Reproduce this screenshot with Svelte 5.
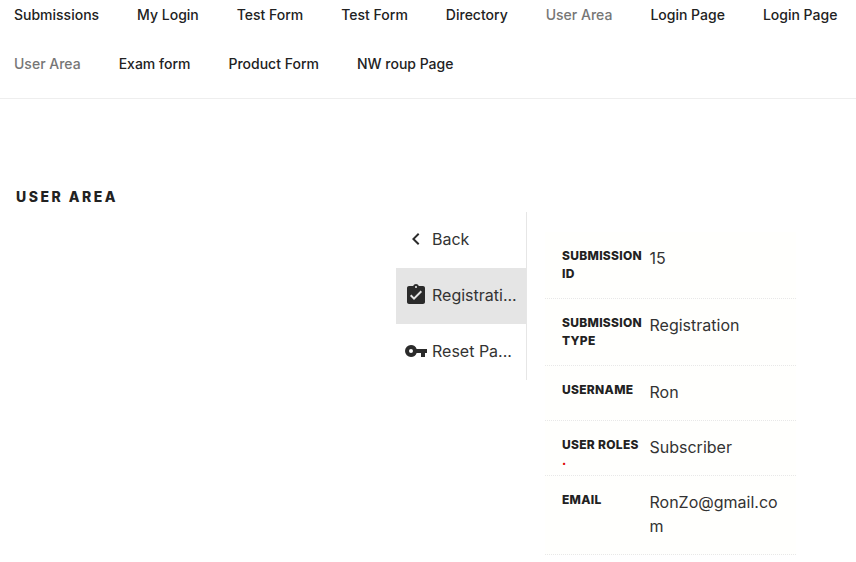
<script lang="ts">
	const navItems = [
		{ label: 'Submissions' },
		{ label: 'My Login' },
		{ label: 'Test Form' },
		{ label: 'Test Form' },
		{ label: 'Directory' },
		{ label: 'User Area', current: true },
		{ label: 'Login Page' },
		{ label: 'Login Page' },
		{ label: 'User Area', current: true },
		{ label: 'Exam form' },
		{ label: 'Product Form' },
		{ label: 'NW roup Page' }
	];

	const rows = [
		{ label: 'Submission ID', value: '15', height: 67 },
		{ label: 'Submission Type', value: 'Registration', height: 67 },
		{ label: 'Username', value: 'Ron', height: 55 },
		{ label: 'User Roles', value: 'Subscriber', height: 55, required: true },
		{ label: 'Email', value: 'RonZo@gmail.com', height: 79 }
	];
</script>

<nav class="site-nav">
	<ul>
		{#each navItems as item}
			<li class:current={item.current}>{item.label}</li>
		{/each}
	</ul>
</nav>

<main class="content">
	<h2 class="page-title">User Area</h2>
	<div class="area">
		<div class="tabs">
			<div class="tab">
				<svg class="icon" viewBox="0 0 24 24" width="24" height="24">
					<path d="M15.4 7.4 14 6l-6 6 6 6 1.4-1.4L10.8 12z" fill="currentColor" />
				</svg>
				<span>Back</span>
			</div>
			<div class="tab active">
				<svg class="icon" viewBox="0 0 24 24" width="24" height="24">
					<path
						d="M19 3h-4.2C14.4 1.8 13.3 1 12 1s-2.4.8-2.8 2H5c-1.1 0-2 .9-2 2v14c0 1.1.9 2 2 2h14c1.1 0 2-.9 2-2V5c0-1.100-.9-2-2-2zm-7 0c.55 0 1 .45 1 1s-.45 1-1 1-1-.45-1-1 .45-1 1-1zm-2 14-4-4 1.400-1.400L10 14.200l6.600-6.600L18 9l-8 8z"
						fill="currentColor"
					/>
				</svg>
				<span>Registrati...</span>
			</div>
			<div class="tab">
				<svg class="icon" viewBox="0 0 24 24" width="24" height="24">
					<path
						d="M12.650 10A6 6 0 0 0 7 6a6 6 0 0 0 0 12 6 6 0 0 0 5.650-4H17v4h4v-4h2v-4H12.650zM7 14a2 2 0 1 1 0-4 2 2 0 0 1 0 4z"
						fill="currentColor"
					/>
				</svg>
				<span>Reset Pa...</span>
			</div>
		</div>

		<div class="details">
			{#each rows as row}
				<div class="row" style="height: {row.height}px">
					<div class="label">
						{row.label}
						{#if row.required}<span class="req">.</span>{/if}
					</div>
					<div class="value">{row.value}</div>
				</div>
			{/each}
		</div>
	</div>
</main>

<style>
	:global(body) {
		background: #fff;
		font-family: 'Inter', 'Liberation Sans', sans-serif;
		overflow: hidden;
	}

	.site-nav {
		height: 98px;
		border-bottom: 1px solid #eee;
	}

	.site-nav ul {
		display: flex;
		flex-wrap: wrap;
		list-style: none;
		margin: 0;
		padding: 0 0 0 14px;
		column-gap: 38px;
	}

	.site-nav li {
		height: 49px;
		line-height: 30px;
		font-size: 14px;
		font-weight: 500;
		color: #222;
	}

	.site-nav li.current {
		color: #767676;
	}

	.content {
		padding: 88px 60px 0 16px;
	}

	.page-title {
		margin: 0;
		height: 25px;
		line-height: 20px;
		font-size: 14px;
		font-weight: 800;
		letter-spacing: 2.5px;
		text-transform: uppercase;
		color: #222;
	}

	.area {
		display: flex;
		align-items: flex-start;
		padding-left: 380px;
	}

	.tabs {
		width: 130px;
		border-right: 1px solid #e6e6e6;
		flex-shrink: 0;
	}

	.tab {
		display: flex;
		align-items: center;
		height: 56px;
		gap: 4px;
		padding: 0 0 2px 8px;
		font-size: 16px;
		color: #333;
		box-sizing: border-box;
	}

	.tab.active {
		background: #e5e5e5;
	}

	.icon {
		width: 24px;
		height: 24px;
		flex-shrink: 0;
		color: #2b2b2b;
	}

	.details {
		margin-left: 18px;
		width: 251px;
		padding-top: 20px;
	}

	.row {
		display: flex;
		box-sizing: border-box;
		padding: 15px 16px 0 17px;
		border-bottom: 1px dotted #e8e8e8;
		background: #fffffd;
	}

	.label {
		width: 87.5px;
		flex-shrink: 0;
		font-size: 12px;
		line-height: 18px;
		font-weight: 800;
		text-transform: uppercase;
		color: #222;
		letter-spacing: 0.3px;
	}

	.req {
		display: block;
		color: #d00;
		line-height: 14px;
	}

	.value {
		min-width: 0;
		margin-top: -1px;
		font-size: 16px;
		line-height: 24px;
		color: #333;
		overflow-wrap: anywhere;
	}
</style>
